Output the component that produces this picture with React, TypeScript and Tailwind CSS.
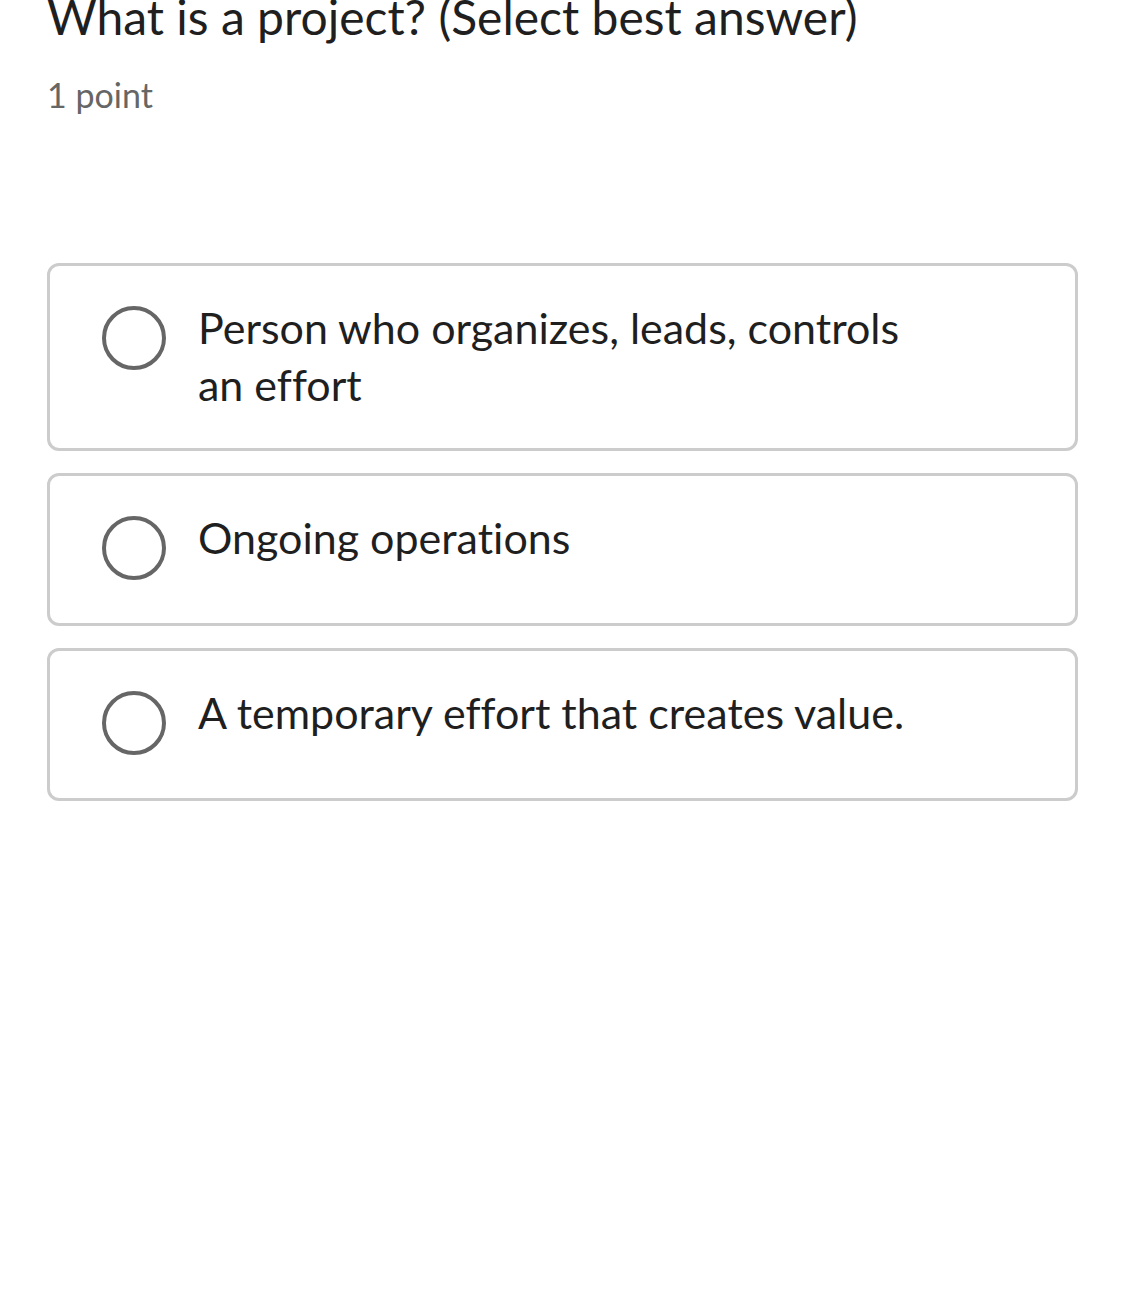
const options = [
  "Person who organizes, leads, controls an effort",
  "Ongoing operations",
  "A temporary effort that creates value.",
];

function Radio() {
  return (
    <span className="shrink-0 mb-[8px] w-[64px] h-[64px] rounded-full border-[4px] border-[#666666] bg-white" />
  );
}

export default function App() {
  return (
    <main className="min-h-[1292px] bg-white px-[47px] overflow-hidden font-['Lato',sans-serif] text-[#1f1f1f] [font-variant-ligatures:no-common-ligatures]">
      <h1 className="-mt-[13px] text-[48px] leading-[60px] font-normal">
        What is a project? (Select best answer)
      </h1>
      <p className="mt-[28px] text-[34px] leading-[40px] text-[#666666]">1 point</p>

      <div className="mt-[148px] flex flex-col gap-[22px]">
        {options.map(o => (
          <label
            key={o}
            className="flex items-start gap-[32px] rounded-[12px] border-[3px] border-[#cccccc] pl-[52px] pr-[120px] pt-[40px] pb-[35px]"
          >
            <Radio />
            <span className="-mt-[7px] text-[43px] leading-[57px]">{o}</span>
          </label>
        ))}
      </div>
    </main>
  );
}
